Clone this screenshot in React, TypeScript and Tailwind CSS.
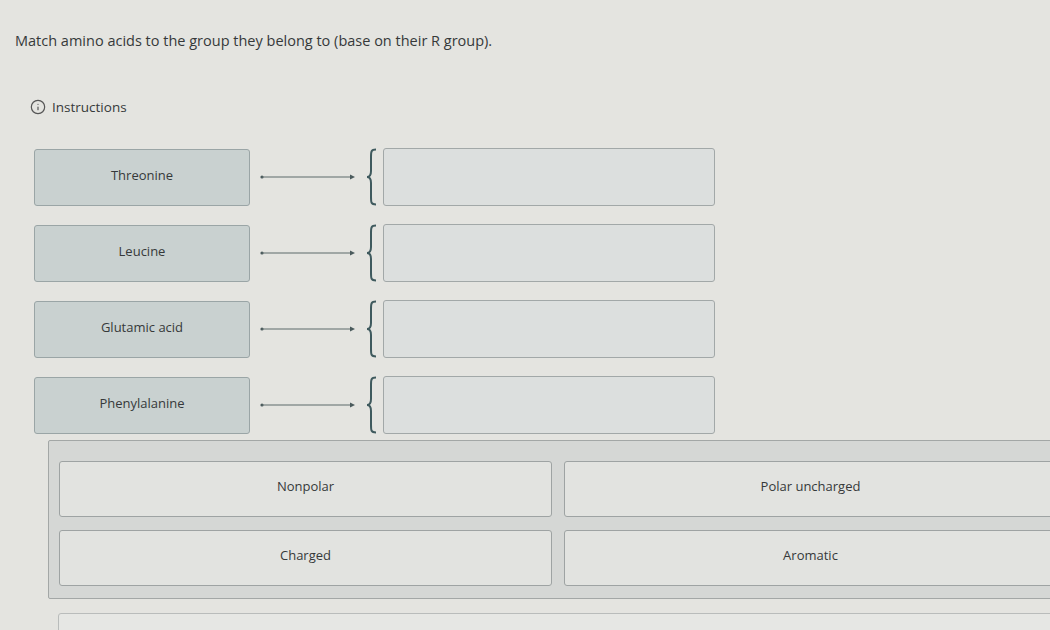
import { Info } from 'lucide-react';

const ITEMS = ['Threonine', 'Leucine', 'Glutamic acid', 'Phenylalanine'];
const GROUPS = ['Nonpolar', 'Polar uncharged', 'Charged', 'Aromatic'];

function Connector() {
  return (
    <svg width="100" height="10" viewBox="0 0 100 10" className="shrink-0">
      <circle cx="3" cy="5" r="1.6" fill="#4a5a5c" />
      <line x1="3" y1="5" x2="94" y2="5" stroke="#5c6a6b" strokeWidth="1.2" />
      <path d="M91 2.5 L96 5 L91 7.5 Z" fill="#4a5a5c" />
    </svg>
  );
}

function Brace() {
  return (
    <svg width="14" height="58" viewBox="0 0 14 58" className="shrink-0">
      <path
        d="M11 1.5 C6 1.5 6 3.5 6 9 L6 23 C6 27 5 29 2 29 C5 29 6 31 6 35 L6 49 C6 54.5 6 56.5 11 56.5"
        fill="none"
        stroke="#3f5a5e"
        strokeWidth="2"
      />
    </svg>
  );
}

export default function App() {
  return (
    <div
      className="h-[630px] w-[1050px] overflow-hidden bg-[#e4e4e0] text-[#36393a]"
      style={{ fontFamily: '"Open Sans", Lato, sans-serif' }}
    >
      <div className="pl-[15px] pt-[30px] text-[14.5px] font-medium">
        Match amino acids to the group they belong to (base on their R group).
      </div>

      <div className="mt-[45px] flex items-center gap-[6px] pl-[30px] text-[13.5px] font-medium">
        <Info className="h-[16px] w-[16px] text-[#555]" strokeWidth={1.8} />
        <span>Instructions</span>
      </div>

      <div className="mt-[31px] flex flex-col gap-[18px] pl-[34px]">
        {ITEMS.map((name) => (
          <div key={name} className="flex items-center">
            <div className="flex h-[57px] w-[216px] items-center justify-center rounded-[3px] border border-[#9aa5a6] bg-[#c9d1d0] pb-[2px] text-[13px] font-medium">
              {name}
            </div>
            <div className="ml-[9px]">
              <Connector />
            </div>
            <div className="ml-[6px]">
              <Brace />
            </div>
            <div className="ml-[4px] h-[58px] w-[332px] rounded-[3px] border border-[#a2a8a8] bg-[#dcdfde]" />
          </div>
        ))}
      </div>

      <div className="ml-[48px] mt-[6px] grid w-[1020px] grid-cols-2 gap-x-[12px] gap-y-[13px] rounded-[2px] border border-[#a3a7a6] bg-[#d5d7d5] px-[10px] pb-[12px] pt-[20px]">
        {GROUPS.map((g) => (
          <div
            key={g}
            className="flex h-[56px] items-center justify-center rounded-[3px] border border-[#9ea3a3] bg-[#e2e3e0] pb-[4px] text-[13px] font-medium"
          >
            {g}
          </div>
        ))}
      </div>

      <div className="ml-[58px] mt-[14px] h-[40px] w-[1000px] rounded-[3px] border border-[#b9bcbb] bg-[#e6e7e4]" />
    </div>
  );
}
